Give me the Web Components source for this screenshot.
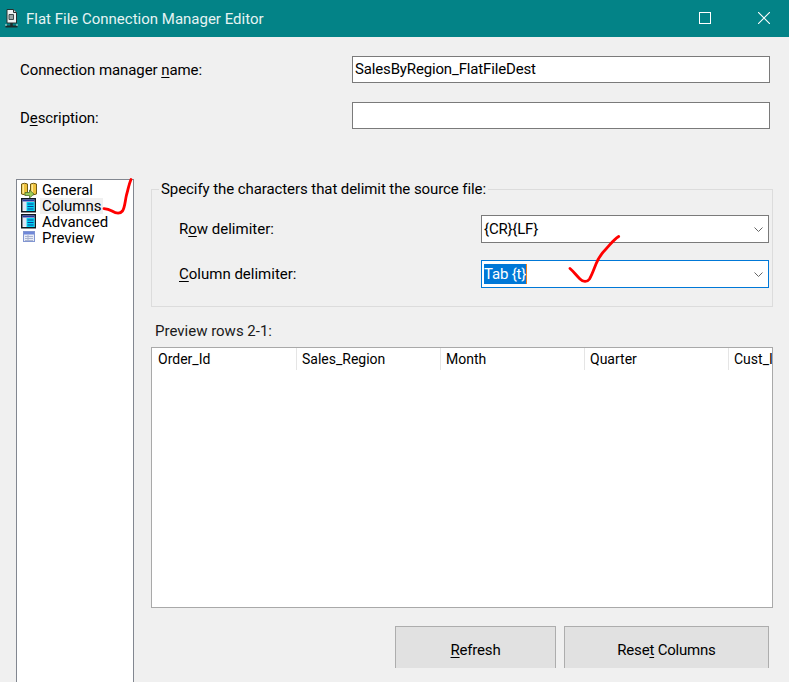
<!DOCTYPE html>
<html>
<head>
<meta charset="utf-8">
<title>Flat File Connection Manager Editor</title>
<style>
  html, body { margin: 0; height: 682px; overflow: hidden; background: #f0f0f0; }
  body { font: 15px Roboto, "Liberation Sans", sans-serif; color: #000; }
  u { text-underline-offset: 2px; }
</style>
</head>
<body>
<fm-window>
  <fm-titlebar slot="title">Flat File Connection Manager Editor</fm-titlebar>
  <fm-field value="SalesByRegion_FlatFileDest">Connection manager <u>n</u>ame:</fm-field>
  <fm-field style="--label-top:4px">D<u>e</u>scription:</fm-field>
  <fm-main>
    <fm-nav slot="nav">
      <fm-navitem icon="general">General</fm-navitem>
      <fm-navitem icon="columns" hover>Columns</fm-navitem>
      <fm-navitem icon="columns">Advanced</fm-navitem>
      <fm-navitem icon="preview">Preview</fm-navitem>
    </fm-nav>
    <fm-group legend="Specify the characters that delimit the source file:">
      <fm-combo value="{CR}{LF}">R<u>o</u>w delimiter:</fm-combo>
      <fm-combo value="Tab {t}" focused><u>C</u>olumn delimiter:</fm-combo>
    </fm-group>
    <fm-preview label="Preview rows 2-1:" columns="Order_Id,Sales_Region,Month,Quarter,Cust_ID"></fm-preview>
    <fm-actions>
      <fm-button width="161"><u>R</u>efresh</fm-button>
      <fm-button width="205">Rese<u>t</u> Columns</fm-button>
    </fm-actions>
  </fm-main>
  <fm-ink slot="ink"></fm-ink>
</fm-window>

<script>
function define(name, css, html) {
  customElements.define(name, class extends HTMLElement {
    constructor() {
      super();
      this.attachShadow({ mode: 'open' });
    }
    connectedCallback() {
      var markup = typeof html === 'function' ? html(this) : html;
      this.shadowRoot.innerHTML = `<style>${css}</style>${markup}`;
    }
  });
}

define('fm-window', `
  :host { display: block; position: relative; width: 789px; height: 682px; overflow: hidden; }
  .fields { display: flex; flex-direction: column; gap: 19px; padding: 19px 19px 0 20px; }
`, `
  <slot name="title"></slot>
  <div class="fields"><slot></slot></div>
  <slot name="ink"></slot>
`);

define('fm-titlebar', `
  :host { display: flex; align-items: center; height: 37px; background: #038387; color: #e6f3f3; font-size: 15px; }
  .logo { width: 16px; height: 21px; margin: 0 5px 0 5px; flex: none; }
  .text { flex: 1; white-space: nowrap; }
  .max { width: 12px; height: 12px; margin: 0 47px 1px 0; flex: none; }
  .close { width: 12px; height: 12px; margin: 0 19px 1px 0; flex: none; }
`, `
  <svg class="logo" viewBox="0 0 16 21">
    <path d="M2 1.500h6.500l3 3v10.500H2z" fill="#eef2f2" stroke="#26302f"/>
    <path d="M8.500 1.500v3h3" fill="#cfd6d6" stroke="#26302f"/>
    <path d="M4 6.500h4.500v5H4z" fill="#9aa6a6" stroke="#3c4a4a"/>
    <path d="M6.500 15v3" stroke="#1c2a2a" stroke-width="2.500"/>
    <path d="M.5 18.500h12" stroke="#1c2a2a" stroke-width="2"/>
    <path d="M0 17h2M11 17h2" stroke="#cfe2e2"/>
  </svg>
  <div class="text"><slot></slot></div>
  <svg class="max" viewBox="0 0 12 12"><rect x=".5" y=".5" width="11" height="11" fill="none" stroke="#fff"/></svg>
  <svg class="close" viewBox="0 0 12 12"><path d="M0 0l12 12M12 0L0 12" stroke="#fff" stroke-width="1.1"/></svg>
`);

define('fm-field', `
  :host { display: flex; align-items: center; height: 27px; }
  .label { width: 332px; flex: none; white-space: nowrap; padding-top: var(--label-top, 0); letter-spacing: -.08px; }
  .box { flex: 1; height: 25px; line-height: 24px; padding-left: 2px; background: #fff; border: 1px solid #7a7a7a; white-space: nowrap; letter-spacing: -.15px; }
`, el => `
  <div class="label"><slot></slot></div>
  <div class="box">${el.getAttribute('value') || ''}</div>
`);

define('fm-main', `
  :host { display: grid; grid-template-columns: 118px 622px; grid-template-rows: 128px 319px 42px; column-gap: 17px; margin: 31px -19px 0 -4px; }
  .nav { grid-row: 1 / span 3; height: 520px; }
`, `
  <div class="nav"><slot name="nav"></slot></div>
  <slot></slot>
`);

define('fm-nav', `
  :host { display: block; height: 100%; box-sizing: border-box; background: #fff; border: 1px solid #828790; border-bottom: 0; padding-top: 2px; }
`, `<slot></slot>`);

const navIcons = {
  general: `
    <path d="M.5 2q3-1.500 6 0v10q-3 1.500-6 0z" fill="#eec13c" stroke="#6f5a14"/>
    <path d="M9.500 2q3-1.500 6 0v10q-3 1.500-6 0z" fill="#eec13c" stroke="#6f5a14"/>
    <path d="M2.200 2.500v9M11.200 2.500v9" stroke="#fff0a8" stroke-width="1.300"/>
    <path d="M4 10.500h4.500V8l4.500 4-4.500 4v-2.500H4z" fill="#9ccc58" stroke="#4f6e2a" stroke-width=".8"/>`,
  columns: `
    <rect x=".75" y=".75" width="13.500" height="13" fill="#fff" stroke="#101820" stroke-width="1.500"/>
    <rect x="1.500" y="1.500" width="12" height="2" fill="#27389c"/>
    <rect x="2" y="4" width="3.500" height="8.500" fill="#dde4f4"/>
    <rect x="5.500" y="4" width="8" height="9" fill="#00d4f4"/>
    <path d="M6.500 6h6M6.500 8.500h6M6.500 11h6" stroke="#0a3f96" stroke-width="1.200"/>`,
  preview: `
    <rect x="2.500" y="1.500" width="11" height="10" fill="#e8ecf6" stroke="#8296d2"/>
    <rect x="3" y="2" width="10" height="2.500" fill="#7088d8"/>
    <path d="M4 6.500h8M4 8.500h8M4 10.500h8M7 5v6" stroke="#aab4d0"/>`
};

define('fm-navitem', `
  :host { display: flex; align-items: center; height: 16px; padding-left: 4px; white-space: nowrap; }
  svg { width: 16px; height: 16px; flex: none; margin-right: 5px; }
  .text { line-height: 16px; padding-right: 2px; }
  :host([hover]) .text { background: #f0f0f0; margin-left: -2px; padding-left: 2px; }
`, el => `
  <svg viewBox="0 0 16 16">${navIcons[el.getAttribute('icon')]}</svg>
  <div class="text"><slot></slot></div>
`);

define('fm-group', `
  :host { display: block; }
  fieldset { margin: 0; padding: 16px 3px 17px 27px; height: 128px; box-sizing: border-box; border: 1px solid #dcdcdc; display: flex; flex-direction: column; gap: 17px; }
  legend { padding: 0 2px; margin-left: -20px; line-height: 20px; letter-spacing: -.08px; }
`, el => `
  <fieldset>
    <legend>${el.getAttribute('legend')}</legend>
    <slot></slot>
  </fieldset>
`);

define('fm-combo', `
  :host { display: flex; align-items: center; height: 28px; }
  .label { width: 302px; flex: none; white-space: nowrap; }
  .box { flex: 1; height: 26px; display: flex; align-items: center; padding: 0 5px 0 2px; background: #fff; border: 1px solid #7a7a7a; white-space: nowrap; letter-spacing: -.2px; }
  :host([focused]) .box { border-color: #0078d7; }
  .value { flex: 1; }
  :host([focused]) .value span { display: inline-block; line-height: 20px; background: #0078d7; color: #fff; border-right: 1px solid #f08020; }
  svg { width: 9px; height: 5px; flex: none; }
`, el => `
  <div class="label"><slot></slot></div>
  <div class="box">
    <div class="value"><span>${el.getAttribute('value')}</span></div>
    <svg viewBox="0 0 9 5"><path d="M.5.5l4 4 4-4" fill="none" stroke="#666"/></svg>
  </div>
`);

define('fm-preview', `
  :host { display: block; }
  .label { height: 40px; box-sizing: border-box; padding: 14px 0 0 4px; line-height: 20px; white-space: nowrap; color: #1a1a1a; }
  .table { height: 259px; background: #fff; border: 1px solid #a9a9a9; overflow: hidden; display: flex; font-size: 14px; }
  .col { flex: 0 0 144px; box-sizing: border-box; height: 22px; line-height: 22px; padding-left: 5px; border-right: 1px solid #e5e5e5; white-space: nowrap; }
  .col:first-child { flex-basis: 145px; padding-left: 6px; }
  .col:last-child { flex: 1; border-right: 0; overflow: hidden; }
`, el => `
  <div class="label">${el.getAttribute('label')}</div>
  <div class="table">
    ${el.getAttribute('columns').split(',').map(c => `<div class="col">${c}</div>`).join('')}
  </div>
`);

define('fm-actions', `
  :host { display: flex; justify-content: flex-end; gap: 8px; padding-right: 4px; }
`, `<slot></slot>`);

define('fm-button', `
  :host { display: flex; align-items: center; justify-content: center; box-sizing: border-box; height: 42px; padding-top: 4px; background: #e1e1e1; border: 1px solid #adadad; border-bottom: 0; white-space: nowrap; letter-spacing: -.2px; }
`, el => `
  <style>:host { width: ${el.getAttribute('width')}px; }</style>
  <div><slot></slot></div>
`);

define('fm-ink', `
  :host { position: absolute; inset: 0; pointer-events: none; }
  svg { width: 789px; height: 682px; display: block; }
  path { fill: none; stroke: #f00; stroke-width: 2.8; stroke-linecap: round; stroke-linejoin: round; }
`, `
  <svg viewBox="0 0 789 682">
    <path d="M131 179.5C129 184 128 190 126.5 195C125 201 125 207 122.5 211C120 214 116 213.5 112 211C109 209.5 107 209 104 208.7"/>
    <path d="M618.7 236.5C613 240 610 245 606 249C601 254 598 259 596 264C594 269 592 275 589.5 279C587 282.5 583 282 580 279C576 275 573 271 570 268.5"/>
  </svg>
`);
</script>
</body>
</html>
